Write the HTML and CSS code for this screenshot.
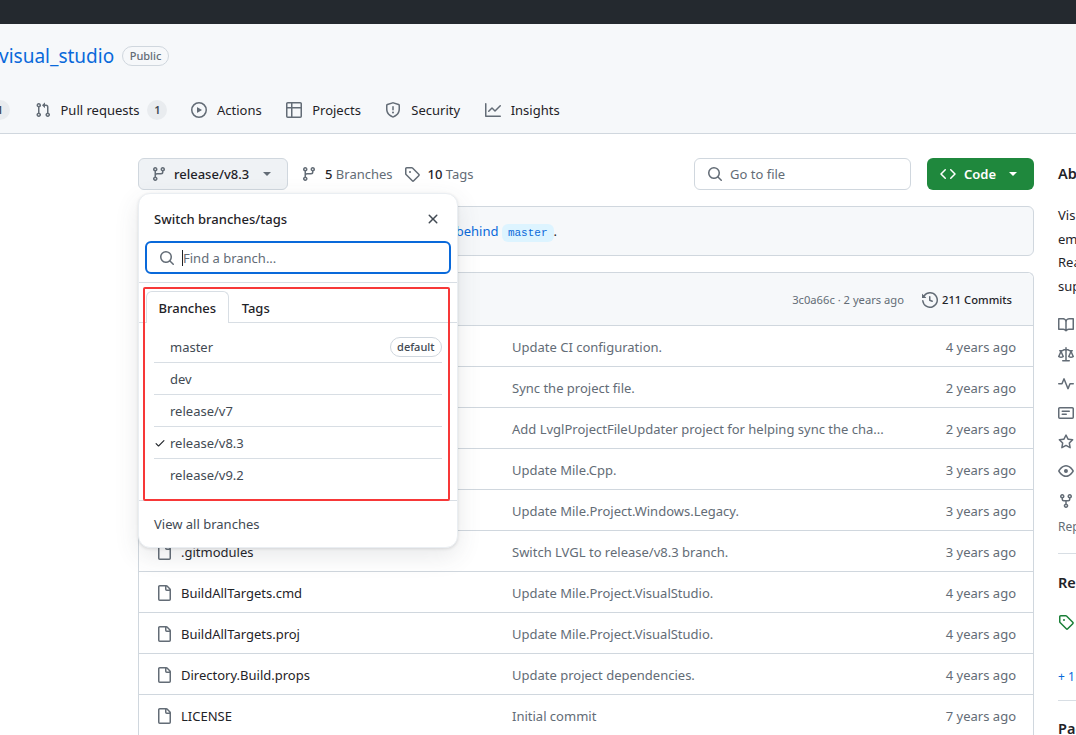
FILE: index.html
```html
<!DOCTYPE html>
<html lang="en">
<head>
<meta charset="utf-8">
<title>visual_studio</title>
<link rel="stylesheet" href="styles.css">
</head>
<body>
<svg class="sprite" width="0" height="0" aria-hidden="true">
<symbol id="i-branch" viewBox="0 0 16 16"><path d="M9.5 3.25a2.25 2.25 0 1 1 3 2.122V6A2.5 2.5 0 0 1 10 8.5H6a1 1 0 0 0-1 1v1.128a2.251 2.251 0 1 1-1.5 0V5.372a2.25 2.25 0 1 1 1.5 0v1.836A2.493 2.493 0 0 1 6 7h4a1 1 0 0 0 1-1v-.628A2.25 2.25 0 0 1 9.5 3.25Zm-6 0a.75.75 0 1 0 1.5 0 .75.75 0 0 0-1.5 0Zm8.25-.75a.75.75 0 1 0 0 1.5.75.75 0 0 0 0-1.5ZM4.25 12a.75.75 0 1 0 0 1.5.75.75 0 0 0 0-1.5Z"/></symbol>
<symbol id="i-pr" viewBox="0 0 16 16"><path d="M1.5 3.25a2.25 2.25 0 1 1 3 2.122v5.256a2.251 2.251 0 1 1-1.5 0V5.372A2.25 2.25 0 0 1 1.5 3.25Zm5.677-.177L9.573.677A.25.25 0 0 1 10 .854V2.5h1A2.5 2.5 0 0 1 13.5 5v5.628a2.251 2.251 0 1 1-1.5 0V5a1 1 0 0 0-1-1h-1v1.646a.25.25 0 0 1-.427.177L7.177 3.427a.25.25 0 0 1 0-.354ZM3.75 2.5a.75.75 0 1 0 0 1.5.75.75 0 0 0 0-1.5Zm0 9.5a.75.75 0 1 0 0 1.5.75.75 0 0 0 0-1.5Zm8.25.75a.75.75 0 1 0 1.5 0 .75.75 0 0 0-1.5 0Z"/></symbol>
<symbol id="i-play" viewBox="0 0 16 16"><path d="M8 0a8 8 0 1 1 0 16A8 8 0 0 1 8 0ZM1.5 8a6.5 6.5 0 1 0 13 0 6.5 6.5 0 0 0-13 0Zm4.879-2.773 4.264 2.559a.25.25 0 0 1 0 .428l-4.264 2.559A.25.25 0 0 1 6 10.559V5.442a.25.25 0 0 1 .379-.215Z"/></symbol>
<symbol id="i-table" viewBox="0 0 16 16"><path d="M0 1.75C0 .784.784 0 1.75 0h12.5C15.216 0 16 .784 16 1.75v12.5A1.75 1.75 0 0 1 14.25 16H1.75A1.75 1.75 0 0 1 0 14.25ZM6.5 6.5v8h7.75a.25.25 0 0 0 .25-.25V6.5Zm8-1.5V1.75a.25.25 0 0 0-.25-.25H6.5V5Zm-13 1.5v7.75c0 .138.112.25.25.25H5v-8ZM5 5V1.5H1.75a.25.25 0 0 0-.25.25V5Z"/></symbol>
<symbol id="i-shield" viewBox="0 0 16 16"><path d="M7.467.133a1.748 1.748 0 0 1 1.066 0l5.25 1.68A1.75 1.75 0 0 1 15 3.48V7c0 1.566-.32 3.182-1.303 4.682-.983 1.498-2.585 2.813-5.032 3.855a1.697 1.697 0 0 1-1.33 0c-2.447-1.042-4.049-2.357-5.032-3.855C1.32 10.182 1 8.566 1 7V3.48a1.75 1.75 0 0 1 1.217-1.667Zm.61 1.429a.25.25 0 0 0-.153 0l-5.25 1.68a.25.25 0 0 0-.174.238V7c0 1.358.275 2.666 1.057 3.86.784 1.194 2.121 2.34 4.366 3.297a.196.196 0 0 0 .154 0c2.245-.956 3.582-2.104 4.366-3.298C13.225 9.666 13.5 8.36 13.5 7V3.48a.251.251 0 0 0-.174-.237l-5.25-1.68ZM8.75 4.75v3a.75.75 0 0 1-1.5 0v-3a.75.75 0 0 1 1.5 0ZM9 10.5a1 1 0 1 1-2 0 1 1 0 0 1 2 0Z"/></symbol>
<symbol id="i-graph" viewBox="0 0 16 16"><path d="M1.5 1.75V13.5h13.75a.75.75 0 0 1 0 1.5H.75a.75.75 0 0 1-.75-.75V1.75a.75.75 0 0 1 1.5 0Zm14.28 2.53-5.25 5.25a.75.75 0 0 1-1.06 0L7 7.06 4.28 9.78a.751.751 0 0 1-1.042-.018.751.751 0 0 1-.018-1.042l3.25-3.25a.75.75 0 0 1 1.06 0L10 7.94l4.72-4.72a.751.751 0 0 1 1.042.018.751.751 0 0 1 .018 1.042Z"/></symbol>
<symbol id="i-tag" viewBox="0 0 16 16"><path d="M1 7.775V2.75C1 1.784 1.784 1 2.75 1h5.025c.464 0 .91.184 1.238.513l6.25 6.25a1.75 1.75 0 0 1 0 2.474l-5.026 5.026a1.75 1.75 0 0 1-2.474 0l-6.25-6.25A1.752 1.752 0 0 1 1 7.775Zm1.5 0c0 .066.026.13.073.177l6.25 6.25a.25.25 0 0 0 .354 0l5.025-5.025a.25.25 0 0 0 0-.354l-6.25-6.25a.25.25 0 0 0-.177-.073H2.75a.25.25 0 0 0-.25.25ZM6 5a1 1 0 1 1 0 2 1 1 0 0 1 0-2Z"/></symbol>
<symbol id="i-search" viewBox="0 0 16 16"><path d="M10.68 11.74a6 6 0 0 1-7.922-8.982 6 6 0 0 1 8.982 7.922l3.04 3.04a.749.749 0 0 1-.326 1.275.749.749 0 0 1-.734-.215ZM11.5 7a4.499 4.499 0 1 0-8.997 0A4.499 4.499 0 0 0 11.5 7Z"/></symbol>
<symbol id="i-code" viewBox="0 0 16 16"><path d="m11.28 3.22 4.25 4.25a.75.75 0 0 1 0 1.06l-4.25 4.25a.749.749 0 0 1-1.275-.326.749.749 0 0 1 .215-.734L13.94 8l-3.72-3.72a.749.749 0 0 1 .326-1.275.749.749 0 0 1 .734.215Zm-6.56 0a.751.751 0 0 1 1.042.018.751.751 0 0 1 .018 1.042L2.06 8l3.72 3.72a.749.749 0 0 1-.326 1.275.749.749 0 0 1-.734-.215L.47 8.53a.75.75 0 0 1 0-1.06Z"/></symbol>
<symbol id="i-history" viewBox="0 0 16 16"><path d="m.427 1.927 1.215 1.215a8.002 8.002 0 1 1-1.6 5.685.75.75 0 1 1 1.493-.154 6.5 6.5 0 1 0 1.18-4.458l1.358 1.358A.25.25 0 0 1 3.896 6H.25A.25.25 0 0 1 0 5.75V2.104a.25.25 0 0 1 .427-.177ZM7.75 4a.75.75 0 0 1 .75.75v2.992l2.028.812a.75.75 0 0 1-.557 1.392l-2.5-1A.751.751 0 0 1 7 8.25v-3.5A.75.75 0 0 1 7.75 4Z"/></symbol>
<symbol id="i-file" viewBox="0 0 16 16"><path d="M2 1.75C2 .784 2.784 0 3.75 0h6.586c.464 0 .909.184 1.237.513l2.914 2.914c.329.328.513.773.513 1.237v9.586A1.75 1.75 0 0 1 13.25 16h-9.5A1.75 1.75 0 0 1 2 14.25Zm1.75-.25a.25.25 0 0 0-.25.25v12.5c0 .138.112.25.25.25h9.5a.25.25 0 0 0 .25-.25V6h-2.75A1.75 1.75 0 0 1 9 4.25V1.5Zm6.75.062V4.25c0 .138.112.25.25.25h2.688l-.011-.013-2.914-2.914-.013-.011Z"/></symbol>
<symbol id="i-x" viewBox="0 0 16 16"><path d="M3.72 3.72a.75.75 0 0 1 1.06 0L8 6.94l3.22-3.22a.749.749 0 0 1 1.275.326.749.749 0 0 1-.215.734L9.06 8l3.22 3.22a.749.749 0 0 1-.326 1.275.749.749 0 0 1-.734-.215L8 9.06l-3.22 3.22a.751.751 0 0 1-1.042-.018.751.751 0 0 1-.018-1.042L6.94 8 3.72 4.78a.75.75 0 0 1 0-1.06Z"/></symbol>
<symbol id="i-check" viewBox="0 0 16 16"><path d="M13.78 4.22a.75.75 0 0 1 0 1.06l-7.25 7.25a.75.75 0 0 1-1.06 0L2.22 9.28a.751.751 0 0 1 .018-1.042.751.751 0 0 1 1.042-.018L6 10.94l6.72-6.72a.75.75 0 0 1 1.06 0Z"/></symbol>
<symbol id="i-book" viewBox="0 0 16 16"><path d="M0 1.75A.75.75 0 0 1 .75 1h4.253c1.227 0 2.317.59 3 1.501A3.743 3.743 0 0 1 11.006 1h4.245a.75.75 0 0 1 .75.75v10.5a.75.75 0 0 1-.75.75h-4.507a2.25 2.25 0 0 0-1.591.659l-.622.621a.75.75 0 0 1-1.06 0l-.622-.621A2.25 2.25 0 0 0 5.258 13H.75a.75.75 0 0 1-.75-.75Zm7.251 10.324.004-5.073-.002-2.253A2.25 2.25 0 0 0 5.003 2.5H1.5v9h3.757a3.75 3.75 0 0 1 1.994.574ZM8.755 4.75l-.004 7.322a3.752 3.752 0 0 1 1.992-.572H14.5v-9h-3.495a2.25 2.25 0 0 0-2.25 2.25Z"/></symbol>
<symbol id="i-law" viewBox="0 0 16 16"><path d="M8.75.75V2h.985c.304 0 .603.08.867.231l1.29.736c.038.022.08.033.124.033h2.234a.75.75 0 0 1 0 1.5h-.427l2.111 4.692a.75.75 0 0 1-.154.838l-.53-.53.529.531-.001.002-.002.002-.006.006-.006.005-.01.01-.045.04c-.21.176-.441.327-.686.45C14.556 10.78 13.88 11 13 11a4.498 4.498 0 0 1-2.023-.454 3.544 3.544 0 0 1-.686-.45l-.045-.04-.016-.015-.006-.006-.004-.004v-.001a.75.75 0 0 1-.154-.838L12.178 4.5h-.162c-.305 0-.604-.079-.868-.231l-1.29-.736a.245.245 0 0 0-.124-.033H8.75V13h2.5a.75.75 0 0 1 0 1.5h-6.5a.75.75 0 0 1 0-1.5h2.5V3.5h-.984a.245.245 0 0 0-.124.033l-1.289.737c-.265.15-.564.23-.869.23h-.162l2.112 4.692a.75.75 0 0 1-.154.838l-.53-.53.529.531-.001.002-.002.002-.006.006-.016.015-.045.04c-.21.176-.441.327-.686.45C4.556 10.78 3.88 11 3 11a4.498 4.498 0 0 1-2.023-.454 3.544 3.544 0 0 1-.686-.45l-.045-.04-.016-.015-.006-.006-.004-.004v-.001a.75.75 0 0 1-.154-.838L2.178 4.5H1.75a.75.75 0 0 1 0-1.5h2.234a.249.249 0 0 0 .125-.033l1.288-.737c.265-.15.564-.23.869-.23h.984V.75a.75.75 0 0 1 1.5 0Zm2.945 8.477c.285.135.718.273 1.305.273s1.02-.138 1.305-.273L13 6.327Zm-10 0c.285.135.718.273 1.305.273s1.02-.138 1.305-.273L3 6.327Z"/></symbol>
<symbol id="i-pulse" viewBox="0 0 16 16"><path d="M6 2c.306 0 .582.187.696.471L10 10.731l1.304-3.26A.751.751 0 0 1 12 7h3.25a.75.75 0 0 1 0 1.5h-2.742l-1.812 4.528a.751.751 0 0 1-1.392 0L6 4.77 4.696 8.03A.75.75 0 0 1 4 8.5H.75a.75.75 0 0 1 0-1.5h2.742l1.812-4.529A.751.751 0 0 1 6 2Z"/></symbol>
<symbol id="i-note" viewBox="0 0 16 16"><path d="M0 3.75C0 2.784.784 2 1.75 2h12.5c.966 0 1.75.784 1.75 1.75v8.5A1.75 1.75 0 0 1 14.25 14H1.75A1.75 1.75 0 0 1 0 12.25Zm1.75-.25a.25.25 0 0 0-.25.25v8.5c0 .138.112.25.25.25h12.5a.25.25 0 0 0 .25-.25v-8.5a.25.25 0 0 0-.25-.25ZM3.5 6.25a.75.75 0 0 1 .75-.75h7a.75.75 0 0 1 0 1.5h-7a.75.75 0 0 1-.75-.75Zm.75 2.25h4a.75.75 0 0 1 0 1.5h-4a.75.75 0 0 1 0-1.5Z"/></symbol>
<symbol id="i-star" viewBox="0 0 16 16"><path d="M8 .25a.75.75 0 0 1 .673.418l1.882 3.815 4.21.612a.75.75 0 0 1 .416 1.279l-3.046 2.97.719 4.192a.751.751 0 0 1-1.088.791L8 12.347l-3.766 1.98a.75.75 0 0 1-1.088-.79l.72-4.194L.818 6.374a.75.75 0 0 1 .416-1.28l4.21-.611L7.327.668A.75.75 0 0 1 8 .25Zm0 2.445L6.615 5.5a.75.75 0 0 1-.564.41l-3.097.45 2.24 2.184a.75.75 0 0 1 .216.664l-.528 3.084 2.769-1.456a.75.75 0 0 1 .698 0l2.77 1.456-.53-3.084a.75.75 0 0 1 .216-.664l2.24-2.183-3.096-.45a.75.75 0 0 1-.564-.41L8 2.694Z"/></symbol>
<symbol id="i-eye" viewBox="0 0 16 16"><path d="M8 2c1.981 0 3.671.992 4.933 2.078 1.27 1.091 2.187 2.345 2.637 3.023a1.62 1.62 0 0 1 0 1.798c-.45.678-1.367 1.932-2.637 3.023C11.67 13.008 9.981 14 8 14c-1.981 0-3.671-.992-4.933-2.078C1.797 10.83.88 9.576.43 8.898a1.62 1.62 0 0 1 0-1.798c.45-.677 1.367-1.931 2.637-3.022C4.33 2.992 6.019 2 8 2ZM1.679 7.932a.12.12 0 0 0 0 .136c.411.622 1.241 1.75 2.366 2.717C5.176 11.758 6.527 12.5 8 12.5c1.473 0 2.825-.742 3.955-1.715 1.124-.967 1.954-2.096 2.366-2.717a.12.12 0 0 0 0-.136c-.412-.621-1.242-1.75-2.366-2.717C10.824 4.242 9.473 3.5 8 3.5c-1.473 0-2.825.742-3.955 1.715-1.124.967-1.954 2.096-2.366 2.717ZM8 10a2 2 0 1 1-.001-3.999A2 2 0 0 1 8 10Z"/></symbol>
<symbol id="i-fork" viewBox="0 0 16 16"><path d="M5 5.372v.878c0 .414.336.75.75.75h4.5a.75.75 0 0 0 .75-.75v-.878a2.25 2.25 0 1 1 1.5 0v.878a2.25 2.25 0 0 1-2.25 2.25h-1.5v2.128a2.251 2.251 0 1 1-1.5 0V8.5h-1.5A2.25 2.25 0 0 1 3.5 6.25v-.878a2.25 2.25 0 1 1 1.5 0ZM5 3.25a.75.75 0 1 0-1.5 0 .75.75 0 0 0 1.5 0Zm6.75.75a.75.75 0 1 0 0-1.5.75.75 0 0 0 0 1.5Zm-3 8.75a.75.75 0 1 0-1.5 0 .75.75 0 0 0 1.5 0Z"/></symbol>
</svg>

<header class="topbar"></header>

<section class="repohead">
  <div class="title-row">
    <a class="repo-name">visual_studio</a>
    <span class="pill">Public</span>
  </div>
  <nav class="tabs">
    <span class="tab tab-cut"><span class="count">1</span></span>
    <span class="tab"><svg class="ico"><use href="#i-pr"/></svg>Pull requests<span class="count count-inline">1</span></span>
    <span class="tab"><svg class="ico"><use href="#i-play"/></svg>Actions</span>
    <span class="tab"><svg class="ico"><use href="#i-table"/></svg>Projects</span>
    <span class="tab"><svg class="ico"><use href="#i-shield"/></svg>Security</span>
    <span class="tab"><svg class="ico"><use href="#i-graph"/></svg>Insights</span>
  </nav>
</section>

<div class="layout">
  <main class="main">
    <div class="toolbar">
      <button class="btn branch-btn"><svg class="ico"><use href="#i-branch"/></svg><span class="branch-label">release/v8.3</span><span class="caret"></span></button>
      <a class="meta-link meta-branches"><svg class="ico"><use href="#i-branch"/></svg><span><b>5</b> Branches</span></a>
      <a class="meta-link"><svg class="ico"><use href="#i-tag"/></svg><span><b>10</b> Tags</span></a>
      <div class="goto"><svg class="ico"><use href="#i-search"/></svg>Go to file</div>
      <button class="btn-code"><svg class="ico"><use href="#i-code"/></svg>Code<span class="caret"></span></button>
    </div>

    <div class="notice"><span>This branch is 6 commits ahead of, 18 commits <a class="link">behind</a> <code class="branch-code">master</code>.</span></div>

    <div class="files">
      <div class="commit-head">
        <span class="commit-sha">3c0a66c · 2 years ago</span>
        <span class="commit-count"><svg class="ico"><use href="#i-history"/></svg>211 Commits</span>
      </div>
      <div class="row"><svg class="ico"><use href="#i-file"/></svg><span class="name">.github</span><span class="msg">Update CI configuration.</span><span class="age">4 years ago</span></div>
      <div class="row"><svg class="ico"><use href="#i-file"/></svg><span class="name">Mile.Project</span><span class="msg">Sync the project file.</span><span class="age">2 years ago</span></div>
      <div class="row"><svg class="ico"><use href="#i-file"/></svg><span class="name">LvglProjectFileUpdater</span><span class="msg">Add LvglProjectFileUpdater project for helping sync the cha...</span><span class="age">2 years ago</span></div>
      <div class="row"><svg class="ico"><use href="#i-file"/></svg><span class="name">Mile.Cpp</span><span class="msg">Update Mile.Cpp.</span><span class="age">3 years ago</span></div>
      <div class="row"><svg class="ico"><use href="#i-file"/></svg><span class="name">Mile.Project.Windows</span><span class="msg">Update Mile.Project.Windows.Legacy.</span><span class="age">3 years ago</span></div>
      <div class="row"><svg class="ico"><use href="#i-file"/></svg><span class="name">.gitmodules</span><span class="msg">Switch LVGL to release/v8.3 branch.</span><span class="age">3 years ago</span></div>
      <div class="row"><svg class="ico"><use href="#i-file"/></svg><span class="name">BuildAllTargets.cmd</span><span class="msg">Update Mile.Project.VisualStudio.</span><span class="age">4 years ago</span></div>
      <div class="row"><svg class="ico"><use href="#i-file"/></svg><span class="name">BuildAllTargets.proj</span><span class="msg">Update Mile.Project.VisualStudio.</span><span class="age">4 years ago</span></div>
      <div class="row"><svg class="ico"><use href="#i-file"/></svg><span class="name">Directory.Build.props</span><span class="msg">Update project dependencies.</span><span class="age">4 years ago</span></div>
      <div class="row"><svg class="ico"><use href="#i-file"/></svg><span class="name">LICENSE</span><span class="msg">Initial commit</span><span class="age">7 years ago</span></div>
    </div>

    <div class="popover">
      <div class="pop-head"><span class="pop-title">Switch branches/tags</span><svg class="ico"><use href="#i-x"/></svg></div>
      <div class="pop-search-wrap">
        <div class="pop-search"><svg class="ico"><use href="#i-search"/></svg><span class="cursor"></span>Find a branch...</div>
      </div>
      <div class="pop-tabs">
        <span class="pop-tab active">Branches</span>
        <span class="pop-tab">Tags</span>
      </div>
      <ul class="branches">
        <li class="b-row"><span class="b-check"></span>master<span class="pill pill-default">default</span></li>
        <li class="b-row"><span class="b-check"></span>dev</li>
        <li class="b-row"><span class="b-check"></span>release/v7</li>
        <li class="b-row"><span class="b-check"><svg class="ico-check"><use href="#i-check"/></svg></span>release/v8.3</li>
        <li class="b-row"><span class="b-check"></span>release/v9.2</li>
      </ul>
      <div class="pop-foot">View all branches</div>
      <div class="redbox"></div>
    </div>
  </main>

  <aside class="side">
    <h2 class="side-h side-about">About</h2>
    <p class="side-desc">Visual Studio integration for<br>embedded graphics libraries<br>Readme and project files that<br>support the LVGL toolchain</p>
    <ul class="side-list">
      <li><svg class="ico"><use href="#i-book"/></svg>Readme</li>
      <li><svg class="ico"><use href="#i-law"/></svg>MIT license</li>
      <li><svg class="ico"><use href="#i-pulse"/></svg>Activity</li>
      <li><svg class="ico"><use href="#i-note"/></svg>Custom properties</li>
      <li><svg class="ico"><use href="#i-star"/></svg>Stars</li>
      <li><svg class="ico"><use href="#i-eye"/></svg>Watching</li>
      <li><svg class="ico"><use href="#i-fork"/></svg>Forks</li>
    </ul>
    <p class="side-report">Report repository</p>
    <div class="side-sec">
      <h2 class="side-h">Releases</h2>
      <div class="release"><svg class="ico ico-green"><use href="#i-tag"/></svg>Latest</div>
      <a class="side-more">+ 1 release</a>
    </div>
    <div class="side-sec side-last">
      <h2 class="side-h">Packages</h2>
    </div>
  </aside>
</div>
</body>
</html>
```

FILE: styles.css
```css
* { box-sizing: border-box; }
html, body { margin: 0; height: 735px; overflow: hidden; background: #fff; }
body {
  width: 1076px;
  font-family: "Noto Sans", "Liberation Sans", sans-serif;
  font-size: 13px;
  color: #1f2328;
  line-height: 20px;
}
.sprite { position: absolute; }
.ico { width: 16px; height: 16px; fill: #636c76; flex: none; display: block; }
.ico-check { width: 12px; height: 12px; fill: #1f2328; display: block; }
.ico-green { fill: #1a7f37; }

.topbar { height: 24px; background: #24292f; }

.repohead { height: 110px; background: #f6f8fa; border-bottom: 1px solid #d0d7de; padding-top: 16px; overflow: hidden; }
.title-row { display: flex; align-items: center; height: 32px; gap: 8px; }
.repo-name { font-size: 19px; color: #0969da; margin-left: -1px; line-height: 32px; font-weight: 400; }
.pill { border: 1px solid #d0d7de; border-radius: 10px; font-size: 11px; font-weight: 500; color: #636c76; padding: 0 6.5px; line-height: 18px; }
.tabs { display: flex; align-items: center; gap: 24.5px; margin: 26px 0 0 -10px; height: 24px; }
.tab { display: flex; align-items: center; gap: 10px; color: #1f2328; white-space: nowrap; }
.count { background: #e9ecef; border-radius: 10px; width: 20px; height: 20px; text-align: center; font-size: 11px; font-weight: 600; color: #424a53; }
.count-inline { margin: 0 -1px 0 -2px; }
.tab-cut { margin-right: 0; }

.layout { display: flex; gap: 24px; padding: 24px 0 0 138px; width: 1400px; }
.main { width: 896px; flex: none; position: relative; }
.side { width: 296px; flex: none; font-size: 13px; }

.toolbar { display: flex; align-items: center; height: 32px; }
.btn { display: flex; align-items: center; height: 32px; width: 150px; background: #eff2f5; border: 1px solid #d0d7de; border-radius: 6px; padding: 0 16px 0 12px; font: inherit; font-weight: 500; color: #1f2328; gap: 7px; }
.branch-label { flex: 1; text-align: left; }
.caret { width: 0; height: 0; border: 4px solid transparent; border-top-color: currentColor; border-bottom: 0; flex: none; }
.branch-btn .caret { color: #636c76; }
.meta-link { display: flex; align-items: center; gap: 8px; color: #636c76; white-space: nowrap; margin-right: 11px; }
.meta-branches { margin-left: 13px; }
.meta-link b { color: #1f2328; font-weight: 500; }
.goto { margin-left: auto; display: flex; align-items: center; gap: 7px; width: 217px; height: 32px; border: 1px solid #d0d7de; border-radius: 6px; padding: 0 12px; color: #636c76; }
.btn-code { margin-left: 16px; display: flex; align-items: center; width: 107px; height: 32px; background: #1f883d; border: 0; border-radius: 6px; color: #fff; font: inherit; font-weight: 600; padding: 0 17px 0 13px; gap: 8px; }
.btn-code .ico { fill: #fff; }
.btn-code .caret { margin-left: auto; }

.notice { margin-top: 16px; height: 50px; background: #f6f8fa; border: 1px solid #d0d7de; border-radius: 6px; display: flex; align-items: center; white-space: nowrap; padding: 1px 0 0 28px; color: #1f2328; }
.link { color: #0969da; }
.branch-code { font-family: "Liberation Mono", monospace; font-size: 11px; background: #ddf4ff; color: #0969da; border-radius: 6px; padding: 3px 6px; }

.files { margin-top: 16px; border: 1px solid #d0d7de; border-bottom: 0; border-radius: 6px 6px 0 0; }
.commit-head { height: 52px; padding-top: 1px; background: #f6f8fa; border-radius: 6px 6px 0 0; display: flex; align-items: center; justify-content: flex-end; padding-right: 21px; gap: 18px; }
.commit-sha { color: #636c76; font-size: 11.2px; }
.commit-count { display: flex; align-items: center; gap: 4px; font-size: 11.2px; font-weight: 500; }
.row { display: flex; align-items: center; height: 41px; border-top: 1px solid #d0d7de; padding: 1px 17px 0 17px; }
.row .ico { margin-right: 9px; }
.name { width: 331px; flex: none; white-space: nowrap; }
.msg { flex: 1; color: #636c76; white-space: nowrap; }
.age { color: #636c76; white-space: nowrap; }

.popover { position: absolute; left: 0; top: 35px; width: 320px; height: 355px; background: #fff; border-radius: 12px; box-shadow: 0 1px 3px rgba(31,35,40,.12), 0 8px 24px rgba(66,74,83,.12); border: 1px solid #eaeef2; }
.pop-head { display: flex; align-items: center; justify-content: space-between; padding: 8px 16px 0 15px; height: 41px; }
.pop-title { font-weight: 500; color: #1f2328; }
.pop-head .ico { fill: #424a53; }
.pop-search-wrap { padding: 6px 6px 8px 6px; border-bottom: 1px solid #d8dee4; }
.pop-search { display: flex; align-items: center; height: 33px; border: 2px solid #0969da; border-radius: 6px; padding: 0 12px; color: #636c76; position: relative; }
.pop-search .ico { margin-right: 7px; }
.cursor { width: 1px; height: 16px; background: #1f2328; }
.pop-tabs { display: flex; height: 32px; margin-top: 8px; padding-left: 7px; border-bottom: 1px solid #d8dee4; }
.pop-tab { display: flex; align-items: center; height: 32px; padding: 0 13px; border-top: 1px solid transparent; font-weight: 500; color: #1f2328; }
.pop-tab.active { background: #fff; border: 1px solid #d8dee4; border-bottom: 0; border-radius: 6px 6px 0 0; padding: 0 11.5px; }
.branches { list-style: none; margin: 0; padding: 8px 15px 0 15px; }
.b-row { display: flex; align-items: center; height: 32px; border-bottom: 1px solid #d8dee4; color: #424a53; }
.b-row:last-child { border-bottom: 0; }
.b-check { width: 16px; flex: none; }
.pill-default { margin-left: auto; color: #424a53; }
.pop-foot { margin-top: 9px; border-top: 1px solid #d8dee4; height: 46px; display: flex; align-items: center; padding-left: 15px; color: #424a53; }
.redbox { position: absolute; left: 4px; top: 93px; width: 307px; height: 214px; border: 2px solid #f73838; border-radius: 2px; }

.side-h { margin: 0; font-size: 14.5px; font-weight: 600; line-height: 20px; }
.side-about { margin-top: 5px; }
.side-desc { margin: 21px 0 0; line-height: 23.7px; font-size: 13px; }
.side-list { list-style: none; margin: 12px 0 0; padding: 0; color: #636c76; }
.side-list li { display: flex; align-items: center; height: 29.2px; gap: 8px; }
.side-report { margin: 2px 0 0; color: #636c76; font-size: 12px; }
.side-sec { border-top: 1px solid #d8dee4; margin-top: 16px; padding-top: 18px; }
.release { display: flex; align-items: center; gap: 8px; margin-top: 20px; height: 20px; }
.side-more { display: block; margin-top: 35px; color: #0969da; font-size: 12px; height: 16px; }
.side-last { margin-top: 17px; padding-top: 17px; }
```
